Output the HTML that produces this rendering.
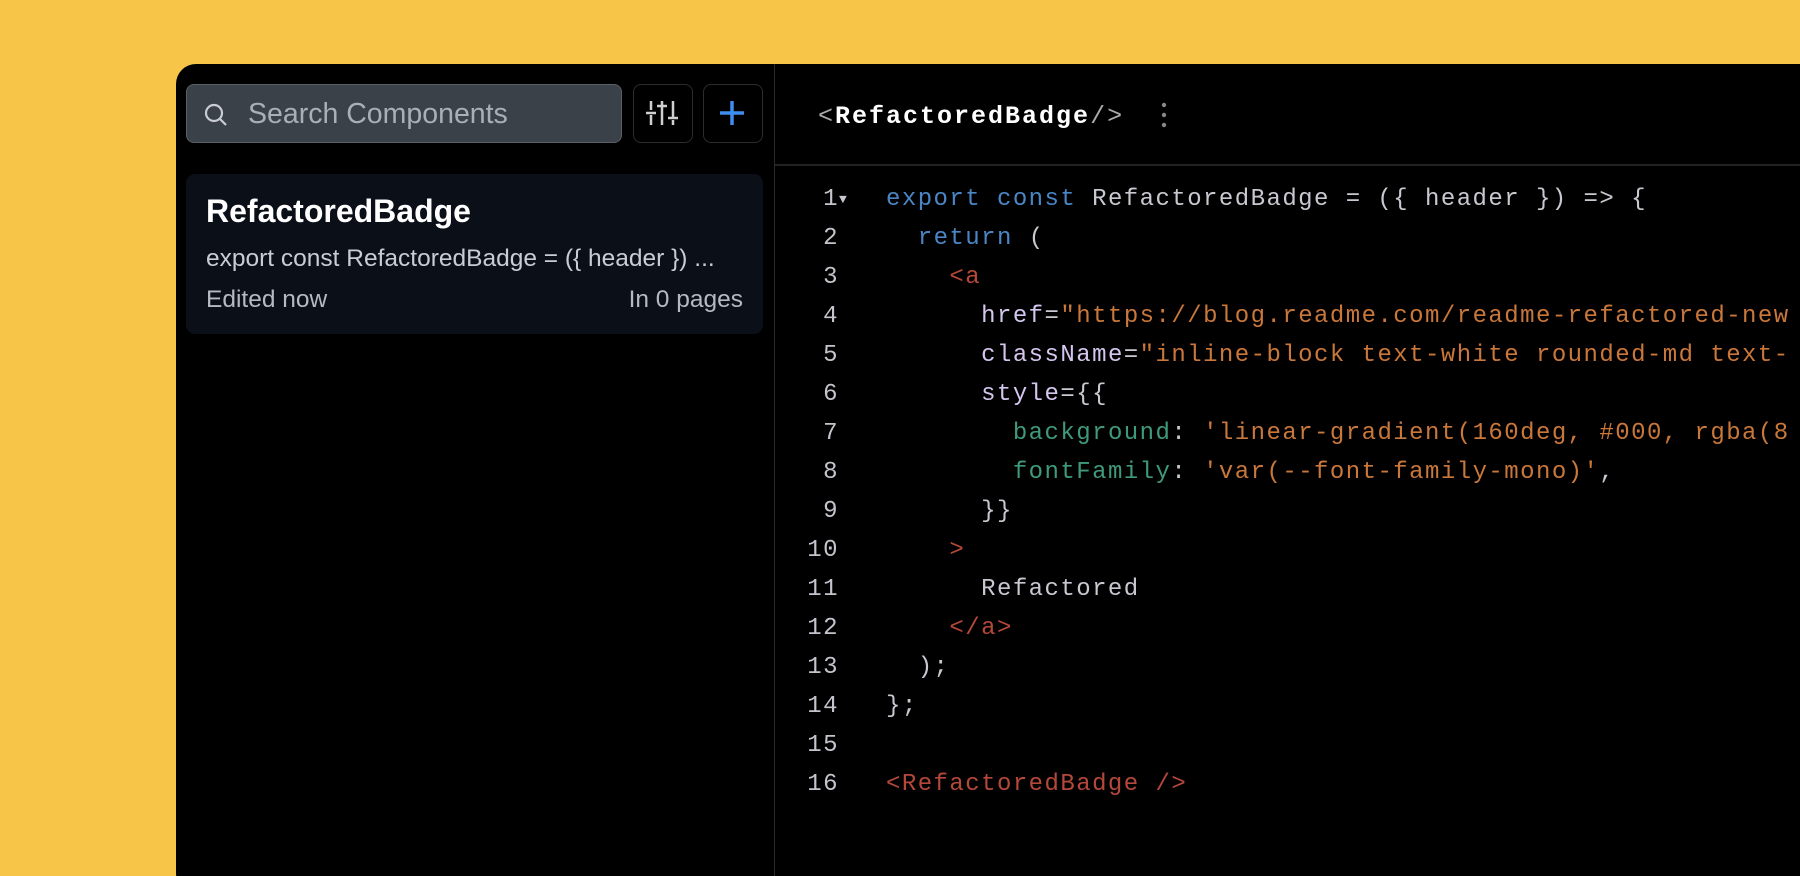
<!DOCTYPE html>
<html><head><style>
html,body{margin:0;width:1800px;height:876px;overflow:hidden}
body{background:#f7c548;font-family:"Liberation Sans",sans-serif;position:relative}
.panel{position:absolute;left:176px;top:64px;width:1624px;height:830px;background:#000;border-radius:20px 0 0 20px}
.div{position:absolute;left:774px;top:64px;width:1px;height:812px;background:#2a2a2a}
.hsep{position:absolute;left:775px;top:164px;width:1025px;height:2px;background:#222}
.search{position:absolute;left:186px;top:84px;width:436px;height:59px;background:#3b4148;border:1px solid #5a6066;border-radius:8px;box-sizing:border-box}
.search span{position:absolute;left:61px;top:13px;font-size:28.5px;color:#a9afb5}
.btn{position:absolute;top:84px;width:60px;height:59px;border:1.5px solid #2c2c2e;border-radius:8px;box-sizing:border-box}
.card{position:absolute;left:186px;top:174px;width:577px;height:160px;background:#0a0f18;border-radius:9px}
.t{position:absolute;left:20px;top:19px;font-size:32px;font-weight:bold;color:#fff}
.s{position:absolute;left:20px;top:71px;font-size:24.5px;color:#c9ccd2}
.e{position:absolute;left:20px;top:112px;font-size:24.5px;color:#b5b9c0}
.p{position:absolute;right:20px;top:112px;font-size:24.5px;color:#b5b9c0}
.hdr{position:absolute;left:818px;top:102px;font-family:"Liberation Mono",monospace;font-size:25px;letter-spacing:2px;color:#fff;font-weight:bold}
.hdr i{font-style:normal;color:#aaa;font-weight:normal}
.clip{position:absolute;left:775px;top:166px;width:1025px;height:710px;overflow:hidden}
.code{position:absolute;left:15px;top:14px;font-family:"Liberation Mono",monospace;font-size:24px;letter-spacing:1.45px;line-height:39px;white-space:pre;color:#c8c8d0}
.ln{display:inline-block;width:49px;text-align:right;color:#c4c4cc}
.ar{display:inline-block;width:47px;font-size:13px;vertical-align:top}
.k{color:#4a86c5}.g{color:#b5483a}.a{color:#d4c6ee}.st{color:#c9773a}.pr{color:#3f9a7a}
</style></head><body>
<div class="panel"></div>
<div class="div"></div><div class="hsep"></div>
<div class="search">
<svg style="position:absolute;left:16px;top:17px" width="26" height="26" viewBox="0 0 26 26" fill="none" stroke="#c9ccd2" stroke-width="2.2"><circle cx="11" cy="11" r="8"/><line x1="17" y1="17" x2="23" y2="23"/></svg>
<span>Search Components</span></div>
<div class="btn" style="left:633px">
<svg width="57" height="56" viewBox="0 0 57 56" stroke="#d0d0d0" stroke-width="2.5"><line x1="17" y1="16" x2="17" y2="25"/><line x1="12" y1="28" x2="22" y2="28"/><line x1="17" y1="30" x2="17" y2="40"/><line x1="28" y1="16" x2="28" y2="40"/><line x1="23" y1="21" x2="33" y2="21"/><line x1="39" y1="16" x2="39" y2="32"/><line x1="34" y1="33" x2="44" y2="33"/><line x1="39" y1="35" x2="39" y2="40"/></svg></div>
<div class="btn" style="left:703px">
<svg width="57" height="56" viewBox="0 0 57 56" stroke="#3d8ef0" stroke-width="3.5"><line x1="28" y1="16" x2="28" y2="40"/><line x1="16" y1="28" x2="40" y2="28"/></svg></div>
<div class="card"><div class="t">RefactoredBadge</div><div class="s">export const RefactoredBadge = ({ header }) ...</div><div class="e">Edited now</div><div class="p">In 0 pages</div></div>
<div class="hdr"><i>&lt;</i>RefactoredBadge<i>/&gt;</i></div>
<svg style="position:absolute;left:1160px;top:102px" width="8" height="28"><circle cx="4" cy="3" r="2.2" fill="#888"/><circle cx="4" cy="13" r="2.2" fill="#888"/><circle cx="4" cy="23" r="2.2" fill="#888"/></svg>
<div class="clip"><div class="code"><span class="ln">1</span><span class="ar">▼</span><span class="k">export const</span> RefactoredBadge = ({ header }) =&gt; {
<span class="ln">2</span><span class="ar"></span>  <span class="k">return</span> (
<span class="ln">3</span><span class="ar"></span>    <span class="g">&lt;a</span>
<span class="ln">4</span><span class="ar"></span>      <span class="a">href</span>=<span class="st">"https://blog.readme.com/readme-refactored-new</span>
<span class="ln">5</span><span class="ar"></span>      <span class="a">className</span>=<span class="st">"inline-block text-white rounded-md text-</span>
<span class="ln">6</span><span class="ar"></span>      <span class="a">style</span>={{
<span class="ln">7</span><span class="ar"></span>        <span class="pr">background</span>: <span class="st">'linear-gradient(160deg, #000, rgba(8</span>
<span class="ln">8</span><span class="ar"></span>        <span class="pr">fontFamily</span>: <span class="st">'var(--font-family-mono)'</span>,
<span class="ln">9</span><span class="ar"></span>      }}
<span class="ln">10</span><span class="ar"></span>    <span class="g">&gt;</span>
<span class="ln">11</span><span class="ar"></span>      Refactored
<span class="ln">12</span><span class="ar"></span>    <span class="g">&lt;/a&gt;</span>
<span class="ln">13</span><span class="ar"></span>  );
<span class="ln">14</span><span class="ar"></span>};
<span class="ln">15</span><span class="ar"></span>
<span class="ln">16</span><span class="ar"></span><span class="g">&lt;RefactoredBadge /&gt;</span></div></div>
</body></html>
